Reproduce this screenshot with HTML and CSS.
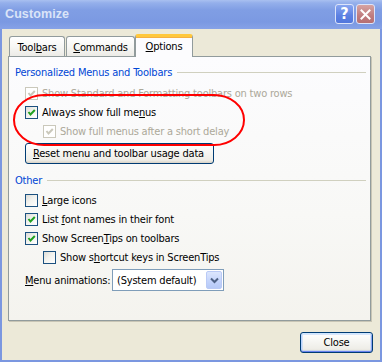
FILE: index.html
```html
<!DOCTYPE html>
<html>
<head>
<meta charset="utf-8">
<title>Customize</title>
<link rel="stylesheet" href="styles.css">
</head>
<body>
<div class="win">
  <div class="titlebar">
    <span class="title">Customize</span>
    <div class="tbtns">
      <span class="tbtn help">?</span>
      <span class="tbtn closex"><svg width="11" height="11" viewBox="0 0 11 11"><path d="M1.5 1.5 L9.5 9.5 M9.5 1.5 L1.5 9.5" stroke="#fff" stroke-width="2" stroke-linecap="square"/></svg></span>
    </div>
  </div>
  <div class="client">
    <div class="tabs">
      <div class="tab t1">Tool<u>b</u>ars</div>
      <div class="tab t2"><u>C</u>ommands</div>
      <div class="tab t3 active"><u>O</u>ptions</div>
    </div>
    <div class="pane">
      <div class="ghead"><span class="gtitle">Personalized Menus and Toolbars</span><span class="gline"></span></div>
      <div class="rows first">
        <div class="row disabled"><span class="cb"><svg width="11" height="11" viewBox="0 0 11 11"><polyline points="2.5,5 4.5,7.5 8.8,3" fill="none" stroke="currentColor" stroke-width="2"/></svg></span><span class="lbl">Show Standard and Formatting toolbars on two rows</span></div>
        <div class="row"><span class="cb"><svg width="11" height="11" viewBox="0 0 11 11"><polyline points="2.5,5 4.5,7.5 8.8,3" fill="none" stroke="currentColor" stroke-width="2"/></svg></span><span class="lbl">Always show full me<u>n</u>us</span></div>
        <div class="row indent disabled"><span class="cb"><svg width="11" height="11" viewBox="0 0 11 11"><polyline points="2.5,5 4.5,7.5 8.8,3" fill="none" stroke="currentColor" stroke-width="2"/></svg></span><span class="lbl">Show full menus after a short delay</span></div>
      </div>
      <div class="btnrow"><button class="btn reset"><u>R</u>eset menu and toolbar usage data</button></div>
      <div class="ghead other"><span class="gtitle">Other</span><span class="gline"></span></div>
      <div class="rows second">
        <div class="row"><span class="cb empty"></span><span class="lbl"><u>L</u>arge icons</span></div>
        <div class="row"><span class="cb"><svg width="11" height="11" viewBox="0 0 11 11"><polyline points="2.5,5 4.5,7.5 8.8,3" fill="none" stroke="currentColor" stroke-width="2"/></svg></span><span class="lbl">List <u>f</u>ont names in their font</span></div>
        <div class="row"><span class="cb"><svg width="11" height="11" viewBox="0 0 11 11"><polyline points="2.5,5 4.5,7.5 8.8,3" fill="none" stroke="currentColor" stroke-width="2"/></svg></span><span class="lbl">Show Screen<u>T</u>ips on toolbars</span></div>
        <div class="row indent"><span class="cb empty"></span><span class="lbl">Show s<u>h</u>ortcut keys in ScreenTips</span></div>
      </div>
      <div class="animrow">
        <span class="lbl"><u>M</u>enu animations:</span>
        <div class="combo"><span class="cval">(System default)</span><span class="cbtn"><svg width="9" height="7" viewBox="0 0 9 7"><polyline points="1,1.5 4.5,5 8,1.5" fill="none" stroke="#4D6185" stroke-width="2"/></svg></span></div>
      </div>
    </div>
    <div class="footer"><button class="btn default">Close</button></div>
  </div>
  <svg class="annot" width="236" height="56" viewBox="0 0 236 56"><rect x="2" y="2" width="230" height="50" rx="30" ry="25" fill="none" stroke="#FF0000" stroke-width="2"/></svg>
</div>
</body>
</html>
```
FILE: styles.css
```css
* { box-sizing: border-box; }
html, body { margin: 0; padding: 0; }
body {
  font-family: "DejaVu Sans Condensed", "DejaVu Sans", sans-serif;
  font-stretch: semi-condensed;
  font-size: 11px;
  color: #000;
  background: #ECE9D8;
}
.win {
  position: relative;
  width: 382px;
  height: 362px;
  overflow: hidden;
  background: #ECE9D8;
}
.titlebar {
  height: 29px;
  display: flex;
  align-items: flex-start;
  justify-content: space-between;
  padding: 0 7px 0 5px;
  background: linear-gradient(to bottom, #A9C0F0 0px, #94AFEB 3px, #809EE4 10px, #7B99E2 22px, #86A2E7 29px);
}
.title {
  margin-top: 7px;
  font-family: "Liberation Sans", Arial, sans-serif;
  font-weight: bold;
  font-size: 12.5px;
  line-height: 15px;
  color: #DAE4F8;
  letter-spacing: 0.1px;
}
.tbtns {
  display: flex;
  gap: 2px;
  margin-top: 4px;
}
.tbtn {
  width: 19px;
  height: 20px;
  border: 1px solid #DCE4FA;
  border-radius: 3px;
  display: flex;
  align-items: center;
  justify-content: center;
  color: #fff;
}
.help {
  background: linear-gradient(to bottom, #88A6F0, #5C80E2 60%, #5277DC);
  font-weight: bold;
  font-size: 16px;
  line-height: 18px;
  font-family: "DejaVu Sans", sans-serif;
}
.closex {
  background: linear-gradient(to bottom, #D6A3A2, #BF7C7E 60%, #B66F72);
}
.client {
  height: 333px;
  border: 2px solid #7B97E0;
  border-top: 0;
  padding: 5px 7px 0 6px;
}
.tabs {
  height: 22px;
  display: flex;
  align-items: flex-end;
  padding-left: 1px;
}
.tab {
  height: 20px;
  border: 1px solid #919B9C;
  border-bottom: 0;
  border-radius: 3px 3px 0 0;
  background: linear-gradient(to bottom, #FFFFFF, #F7F7F5 50%, #ECEBE6);
  display: flex;
  align-items: center;
  justify-content: center;
  padding-top: 1px;
  letter-spacing: -0.2px;
}
.t1 { width: 56px; }
.t2 { width: 69px; margin-left: 1px; }
.t3 { width: 58px; }
.tab.active {
  height: 23px;
  margin-bottom: -1px;
  position: relative;
  z-index: 1;
  background: #FCFCFE;
  border-top: 3px solid #FFC83C;
  box-shadow: inset 0 1px 0 #F5B040;
  padding-top: 0;
  padding-bottom: 2px;
}
.pane {
  width: 363px;
  height: 265px;
  border: 1px solid #919B9C;
  box-shadow: 1px 1px 0 #C8C5B5;
  background: linear-gradient(to bottom, #FCFCFE, #F8F8F6 60%, #F4F3EE);
  padding: 9px 4px 0 6px;
}
.ghead {
  display: flex;
  align-items: center;
  height: 13px;
  line-height: 13px;
}
.gtitle {
  color: #0046D5;
  letter-spacing: -0.2px;
  white-space: nowrap;
}
.gline {
  flex: 1;
  height: 1px;
  background: #D0D0BF;
  margin-left: 5px;
}
.rows.first { margin-top: 5px; }
.rows.second { margin-top: 4px; }
.row {
  height: 19px;
  display: flex;
  align-items: center;
  padding-left: 10px;
}
.row.indent { padding-left: 28px; }
.lbl {
  margin-left: 4px;
  letter-spacing: -0.2px;
  white-space: nowrap;
}
.cb {
  width: 13px;
  height: 13px;
  border: 1px solid #1C5180;
  background: linear-gradient(135deg, #DCDCD7 0%, #F2F2EE 45%, #FFFFFF 100%);
  color: #21A121;
  display: flex;
  align-items: center;
  justify-content: center;
  flex: none;
}
.row.disabled .cb {
  border-color: #CAC8BB;
  background: #FFFFFF;
  color: #CAC8BB;
}
.row.disabled .lbl { color: #ACA899; }
.btnrow { margin-top: 2px; padding-left: 10px; }
.btn {
  font-family: "DejaVu Sans Condensed", "DejaVu Sans", sans-serif;
  font-stretch: semi-condensed;
  font-size: 11px;
  color: #000;
  height: 21px;
  border: 1px solid #003C74;
  border-radius: 3px;
  background: linear-gradient(to bottom, #FFFFFF 0%, #F7F7F4 40%, #EEEDE7 85%, #D8D2C6 100%);
  padding: 0;
  letter-spacing: -0.2px;
  margin: 0;
  white-space: nowrap;
}
.reset {
  width: 189px;
  text-align: left;
  padding-left: 7px;
}
.ghead.other { margin-top: 10px; }
.animrow {
  margin-top: 2px;
  padding-left: 10px;
  display: flex;
  align-items: center;
  height: 22px;
}
.animrow .lbl { margin-left: 0; width: 87px; }
.combo {
  width: 112px;
  height: 22px;
  border: 1px solid #7F9DB9;
  background: #FFFFFF;
  display: flex;
  align-items: center;
  justify-content: space-between;
  padding: 1px;
}
.cval {
  padding-left: 3px;
  letter-spacing: -0.2px;
  white-space: nowrap;
}
.cbtn {
  width: 16px;
  height: 18px;
  border: 1px solid #BACAF6;
  border-radius: 2px;
  background: linear-gradient(to bottom, #DCE6FD, #C3D3FB 60%, #B6C9F7);
  display: flex;
  align-items: center;
  justify-content: center;
  flex: none;
}
.footer {
  margin-top: 11px;
  display: flex;
  justify-content: flex-end;
}
.btn.default {
  width: 73px;
  text-align: center;
  box-shadow: inset 0 1px 0 #CEE7FF, inset 0 -1px 0 #6982EE, inset 1px 0 0 #B8D4FE, inset -1px 0 0 #8AA4F2, inset 0 0 0 2px rgba(180,205,250,0.5);
}
.annot {
  position: absolute;
  left: 12px;
  top: 93px;
}
```
